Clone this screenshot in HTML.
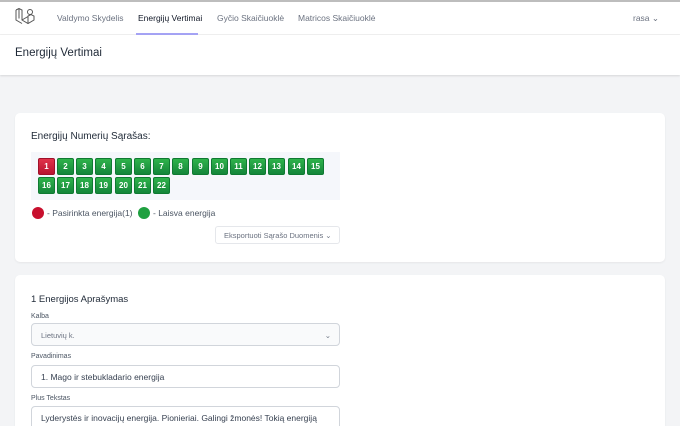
<!DOCTYPE html>
<html style="width:680px;height:426px;overflow:hidden"><head><meta charset="utf-8"><style>
*{box-sizing:border-box;margin:0;padding:0}
body{width:680px;height:426px;overflow:hidden;background:#f3f4f6;font-family:"Liberation Sans",sans-serif;color:#1f2937;position:relative}
.top{position:absolute;left:0;top:0;width:680px;height:2px;background:#bdbdbd}
nav{position:absolute;left:0;top:2px;width:680px;height:33px;background:#fff;border-bottom:1px solid #f0f0f0}
nav a{position:absolute;top:11px;font-size:8.5px;color:#6b7280}
.hdr{position:absolute;left:0;top:35px;width:680px;height:40px;background:#fff;box-shadow:0 1px 2px rgba(0,0,0,.12)}
.card{position:absolute;left:15px;width:650px;background:#fff;border-radius:5px;box-shadow:0 1px 2px rgba(0,0,0,.06)}
.b{position:absolute;width:17px;height:17px;border-radius:2px;background:linear-gradient(#2fb24b,#14863a);color:#fff;font-size:8px;font-weight:bold;text-align:center;line-height:16px;border:1px solid #0f7a32}
.lab{position:absolute;left:16px;font-size:7px;color:#4b5563}
.inp{position:absolute;left:16px;width:309px;height:23px;border:1px solid #d1d5db;border-radius:4px;font-size:8.5px;padding:6px 9px;color:#374151}
</style></head><body>
<div class="top"></div>
<nav>
<svg style="position:absolute;left:15px;top:6px" width="20" height="18" viewBox="0 0 20 18" fill="none" stroke="#555" stroke-width="1"><path d="M1 2l3-1.5 3 1.5v10l6 3.5 6-3.5V8l-3-1.5-3 1.5v4M1 2v10l6 3.5M4 .5v10M7 12l6-3.5M13 15.5V11"/><circle cx="15" cy="4" r="2.5"/></svg>
<a style="left:57px">Valdymo Skydelis</a>
<a style="left:138px;color:#111827">Energijų Vertimai</a>
<div style="position:absolute;left:136px;top:31px;width:62px;height:2px;background:#a5a3f5"></div>
<a style="left:217px">Gyčio Skaičiuoklė</a>
<a style="left:298px">Matricos Skaičiuoklė</a>
<a style="left:633px">rasa ⌄</a>
</nav>
<div class="hdr"><div style="position:absolute;left:15px;top:12px;font-size:11.5px;color:#1f2937">Energijų Vertimai</div></div>
<div class="card" style="top:113px;height:149px">
<div style="position:absolute;left:16px;top:18px;font-size:10px">Energijų Numerių Sąrašas:</div>
<div style="position:absolute;left:16px;top:39px;width:309px;height:48px;background:#f5f7fb"></div>
<div class="b" style="left:23px;top:45px;background:linear-gradient(#e0334a,#b81430);border-color:#a0102a">1</div>
<div class="b" style="left:42px;top:45px">2</div><div class="b" style="left:61px;top:45px">3</div><div class="b" style="left:80px;top:45px">4</div><div class="b" style="left:100px;top:45px">5</div><div class="b" style="left:119px;top:45px">6</div><div class="b" style="left:138px;top:45px">7</div><div class="b" style="left:157px;top:45px">8</div><div class="b" style="left:177px;top:45px">9</div><div class="b" style="left:196px;top:45px">10</div><div class="b" style="left:215px;top:45px">11</div><div class="b" style="left:234px;top:45px">12</div><div class="b" style="left:253px;top:45px">13</div><div class="b" style="left:273px;top:45px">14</div><div class="b" style="left:292px;top:45px">15</div>
<div class="b" style="left:23px;top:64px">16</div><div class="b" style="left:42px;top:64px">17</div><div class="b" style="left:61px;top:64px">18</div><div class="b" style="left:80px;top:64px">19</div><div class="b" style="left:100px;top:64px">20</div><div class="b" style="left:119px;top:64px">21</div><div class="b" style="left:138px;top:64px">22</div>
<div style="position:absolute;left:17px;top:94px;width:12px;height:12px;border-radius:50%;background:#c8102e"></div>
<div style="position:absolute;left:32px;top:95px;font-size:8.5px;color:#4b5563">- Pasirinkta energija(1)</div>
<div style="position:absolute;left:123px;top:94px;width:12px;height:12px;border-radius:50%;background:#1fa040"></div>
<div style="position:absolute;left:138px;top:95px;font-size:8.5px;color:#4b5563">- Laisva energija</div>
<div style="position:absolute;left:200px;top:113px;width:125px;height:18px;border:1px solid #e5e7eb;border-radius:3px;font-size:7.5px;color:#6b7280;padding:4px 0 0 8px">Eksportuoti Sąrašo Duomenis ⌄</div>
</div>
<div class="card" style="top:275px;height:151px;border-radius:5px 5px 0 0">
<div style="position:absolute;left:16px;top:19px;font-size:9.5px">1 Energijos Aprašymas</div>
<div class="lab" style="top:38px">Kalba</div>
<div class="inp" style="top:48px;background:#f9fafb;font-size:7.5px;color:#6b7280;padding-top:7px">Lietuvių k.<span style="position:absolute;right:8px">⌄</span></div>
<div class="lab" style="top:78px">Pavadinimas</div>
<div class="inp" style="top:90px">1. Mago ir stebukladario energija</div>
<div class="lab" style="top:120px">Plus Tekstas</div>
<div class="inp" style="top:131px;height:40px">Lyderystės ir inovacijų energija. Pionieriai. Galingi žmonės! Tokią energiją</div>
</div>
</body></html>
